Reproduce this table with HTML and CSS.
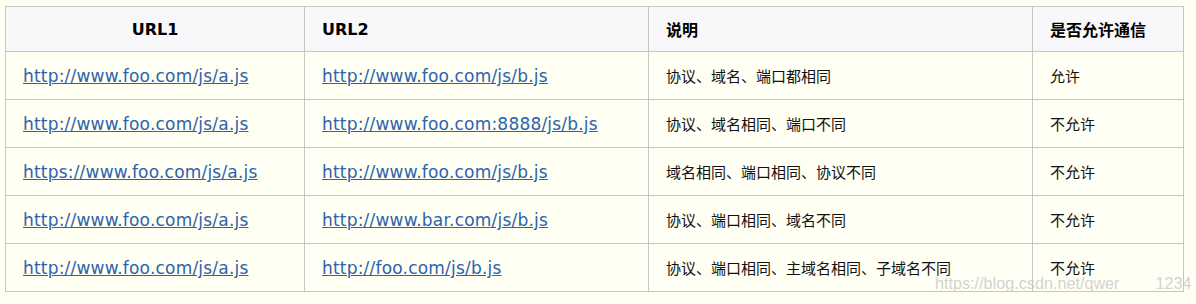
FILE: index.html
```html
<!DOCTYPE html>
<html lang="zh">
<head>
<meta charset="utf-8">
<link rel="stylesheet" href="styles.css">
</head>
<body>
<div class="wrap">
<table class="tbl">
  <colgroup>
    <col class="c1"><col class="c2"><col class="c3"><col class="c4">
  </colgroup>
  <thead>
    <tr><th class="center">URL1</th><th>URL2</th><th>说明</th><th>是否允许通信</th></tr>
  </thead>
  <tbody>
    <tr><td><a href="#">http://www.foo.com/js/a.js</a></td><td><a href="#">http://www.foo.com/js/b.js</a></td><td>协议、域名、端口都相同</td><td>允许</td></tr>
    <tr><td><a href="#">http://www.foo.com/js/a.js</a></td><td><a href="#">http://www.foo.com:8888/js/b.js</a></td><td>协议、域名相同、端口不同</td><td>不允许</td></tr>
    <tr><td><a href="#">https://www.foo.com/js/a.js</a></td><td><a href="#">http://www.foo.com/js/b.js</a></td><td>域名相同、端口相同、协议不同</td><td>不允许</td></tr>
    <tr><td><a href="#">http://www.foo.com/js/a.js</a></td><td><a href="#">http://www.bar.com/js/b.js</a></td><td>协议、端口相同、域名不同</td><td>不允许</td></tr>
    <tr><td><a href="#">http://www.foo.com/js/a.js</a></td><td><a href="#">http://foo.com/js/b.js</a></td><td>协议、端口相同、主域名相同、子域名不同</td><td>不允许</td></tr>
  </tbody>
</table>
<span class="watermark">https://blog.csdn.net/qwer____1234</span>
</div>
</body>
</html>
```
FILE: styles.css
```css
html, body {
  margin: 0;
  padding: 0;
  background: #fffff4;
}
body {
  padding: 6px 0 0 5px;
  font-family: "DejaVu Sans", "Noto Sans CJK SC", sans-serif;
  font-size: 15px;
  color: #111;
}
.wrap {
  position: relative;
  width: 1178px;
}
.tbl {
  border-collapse: collapse;
  width: 1178px;
  table-layout: fixed;
}
.c1 { width: 299px; }
.c2 { width: 344px; }
.c3 { width: 384px; }
.c4 { width: 151px; }
.tbl th, .tbl td {
  border: 1px solid #c6c6c6;
  padding: 0 17px;
  text-align: left;
  vertical-align: middle;
}
.tbl th {
  height: 44px;
  background: #f8f8fa;
  font-weight: bold;
  font-size: 16px;
  color: #000;
}
.tbl th.center { text-align: center; }
.tbl td {
  height: 47px;
  font-family: "Noto Sans CJK SC", sans-serif;
  font-size: 15px;
  color: #111;
}
.tbl td a {
  font-family: "DejaVu Sans", sans-serif;
  font-size: 17px;
  letter-spacing: 0.2px;
  color: #2b63b0;
  text-decoration: underline;
}
.watermark {
  position: absolute;
  left: 930px;
  top: 268px;
  font-family: "Liberation Sans", sans-serif;
  font-size: 16.2px;
  color: rgba(200, 200, 200, 0.8);
  white-space: nowrap;
}
```
